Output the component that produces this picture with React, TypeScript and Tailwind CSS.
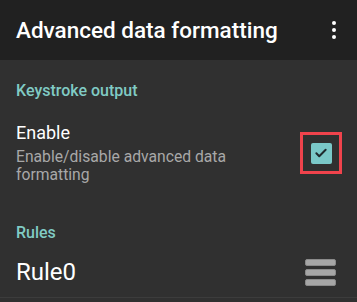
export default function App() {
  return (
    <div className="w-[357px] h-[302px] bg-[#303030] flex flex-col overflow-hidden" style={{ fontFamily: 'Roboto, "Liberation Sans", sans-serif' }}>
      <div className="h-[60px] bg-[#212121] flex items-center pl-4 pr-[21px] shrink-0">
        <div className="flex-1 text-[22.5px] font-medium text-white leading-[28px]">Advanced data formatting</div>
        <div className="flex flex-col gap-[3px]">
          <span className="w-[4px] h-[4px] bg-white rounded-full" />
          <span className="w-[4px] h-[4px] bg-white rounded-full" />
          <span className="w-[4px] h-[4px] bg-white rounded-full" />
        </div>
      </div>

      <div className="pl-4 pt-[21px] text-[16px] font-medium text-[#80cbc4] leading-[20px]">Keystroke output</div>

      <div className="flex items-start pl-4 pr-[15px] mt-[21px]">
        <div className="flex-1">
          <div className="text-[18px] text-white leading-[22px]">Enable</div>
          <div className="text-[15.7px] text-[#a8a8a8] leading-[18px] mt-[4px] w-[250px]">Enable/disable advanced data formatting</div>
        </div>
        <div className="w-[42px] h-[42px] border-[3px] border-[#f0434c] flex items-center justify-center mt-[10px]">
          <div className="w-[21px] h-[21px] rounded-[2px] bg-[#7ac8c8] flex items-center justify-center">
            <svg width="14" height="14" viewBox="0 0 24 24" fill="none" stroke="#1f2a2e" strokeWidth="3.4" strokeLinecap="round" strokeLinejoin="round">
              <path d="M4 12.5l5 5L20 6.5" />
            </svg>
          </div>
        </div>
      </div>

      <div className="pl-4 mt-[39px] text-[16px] font-medium text-[#80cbc4] leading-[20px]">Rules</div>

      <div className="flex items-center pl-4 pr-[21px] mt-[15px]">
        <div className="flex-1 text-[24px] text-white leading-[28px]">Rule0</div>
        <div className="flex flex-col gap-[3px]">
          <span className="w-[31px] h-[7px] bg-[#a6a6a6] rounded-[2px] border border-[#8a8a8a]" />
          <span className="w-[31px] h-[7px] bg-[#a6a6a6] rounded-[2px] border border-[#8a8a8a]" />
          <span className="w-[31px] h-[7px] bg-[#a6a6a6] rounded-[2px] border border-[#8a8a8a]" />
        </div>
      </div>
      <div className="mt-auto mb-[4px] h-px bg-[#3c3c3c]" />
    </div>
  )
}
